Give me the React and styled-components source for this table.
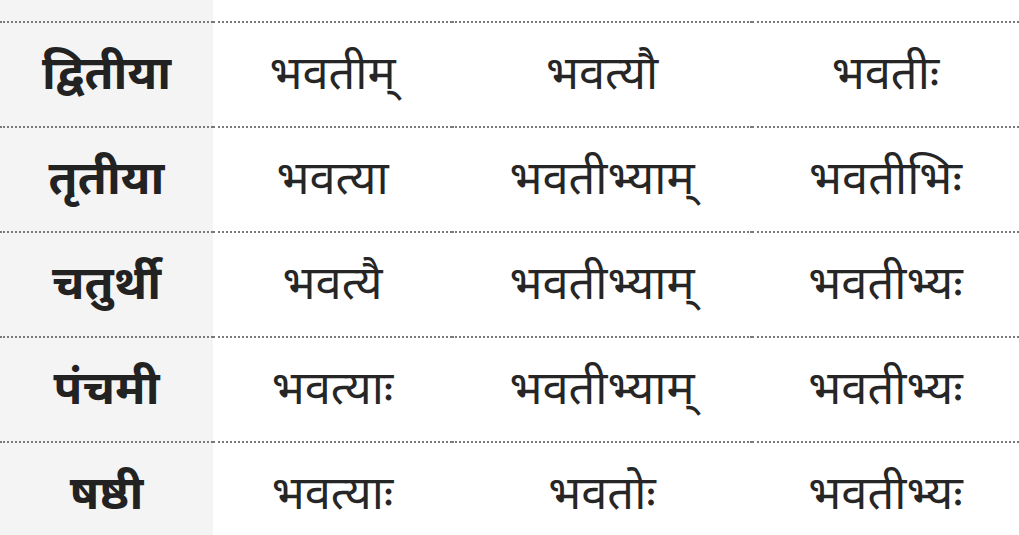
import React from 'react';
import styled, { createGlobalStyle } from 'styled-components';

const GlobalStyle = createGlobalStyle`
  html, body {
    margin: 0;
    padding: 0;
    background: #ffffff;
  }
  body {
    font-family: "Noto Sans Devanagari", "Noto Sans", sans-serif;
    color: #222222;
    overflow: hidden;
  }
`;

const rows = [
  { name: 'द्वितीया', forms: ['भवतीम्', 'भवत्यौ', 'भवतीः'] },
  { name: 'तृतीया', forms: ['भवत्या', 'भवतीभ्याम्', 'भवतीभिः'] },
  { name: 'चतुर्थी', forms: ['भवत्यै', 'भवतीभ्याम्', 'भवतीभ्यः'] },
  { name: 'पंचमी', forms: ['भवत्याः', 'भवतीभ्याम्', 'भवतीभ्यः'] },
  { name: 'षष्ठी', forms: ['भवत्याः', 'भवतोः', 'भवतीभ्यः'] },
];

const App = () => {
  return (
    <>
      <GlobalStyle />
      <Table>
        <Row $spacer>
          <Head />
          <Cell />
          <Cell />
          <Cell />
        </Row>
        {rows.map((row) => (
          <Row key={row.name}>
            <Head>{row.name}</Head>
            {row.forms.map((form, i) => (
              <Cell key={i}>{form}</Cell>
            ))}
          </Row>
        ))}
      </Table>
    </>
  );
};

const Table = styled.div`
  width: 1019px;
  display: flex;
  flex-direction: column;
`;

const Row = styled.div`
  display: grid;
  grid-template-columns: 213px 239px 300px 267px;
  height: ${(p) => (p.$spacer ? '23px' : '105px')};
  & > * {
    box-sizing: border-box;
    border-bottom: 2px dotted #7a7a7a;
  }
`;

const Head = styled.div`
  background: #f4f4f4;
  display: flex;
  align-items: center;
  justify-content: center;
  padding-top: 5px;
  font-weight: 700;
  font-size: 47px;
  line-height: 1;
  color: #222222;
`;

const Cell = styled.div`
  display: flex;
  align-items: center;
  justify-content: center;
  padding-top: 5px;
  font-size: 47px;
  line-height: 1;
  color: #262626;
`;

export default App;
